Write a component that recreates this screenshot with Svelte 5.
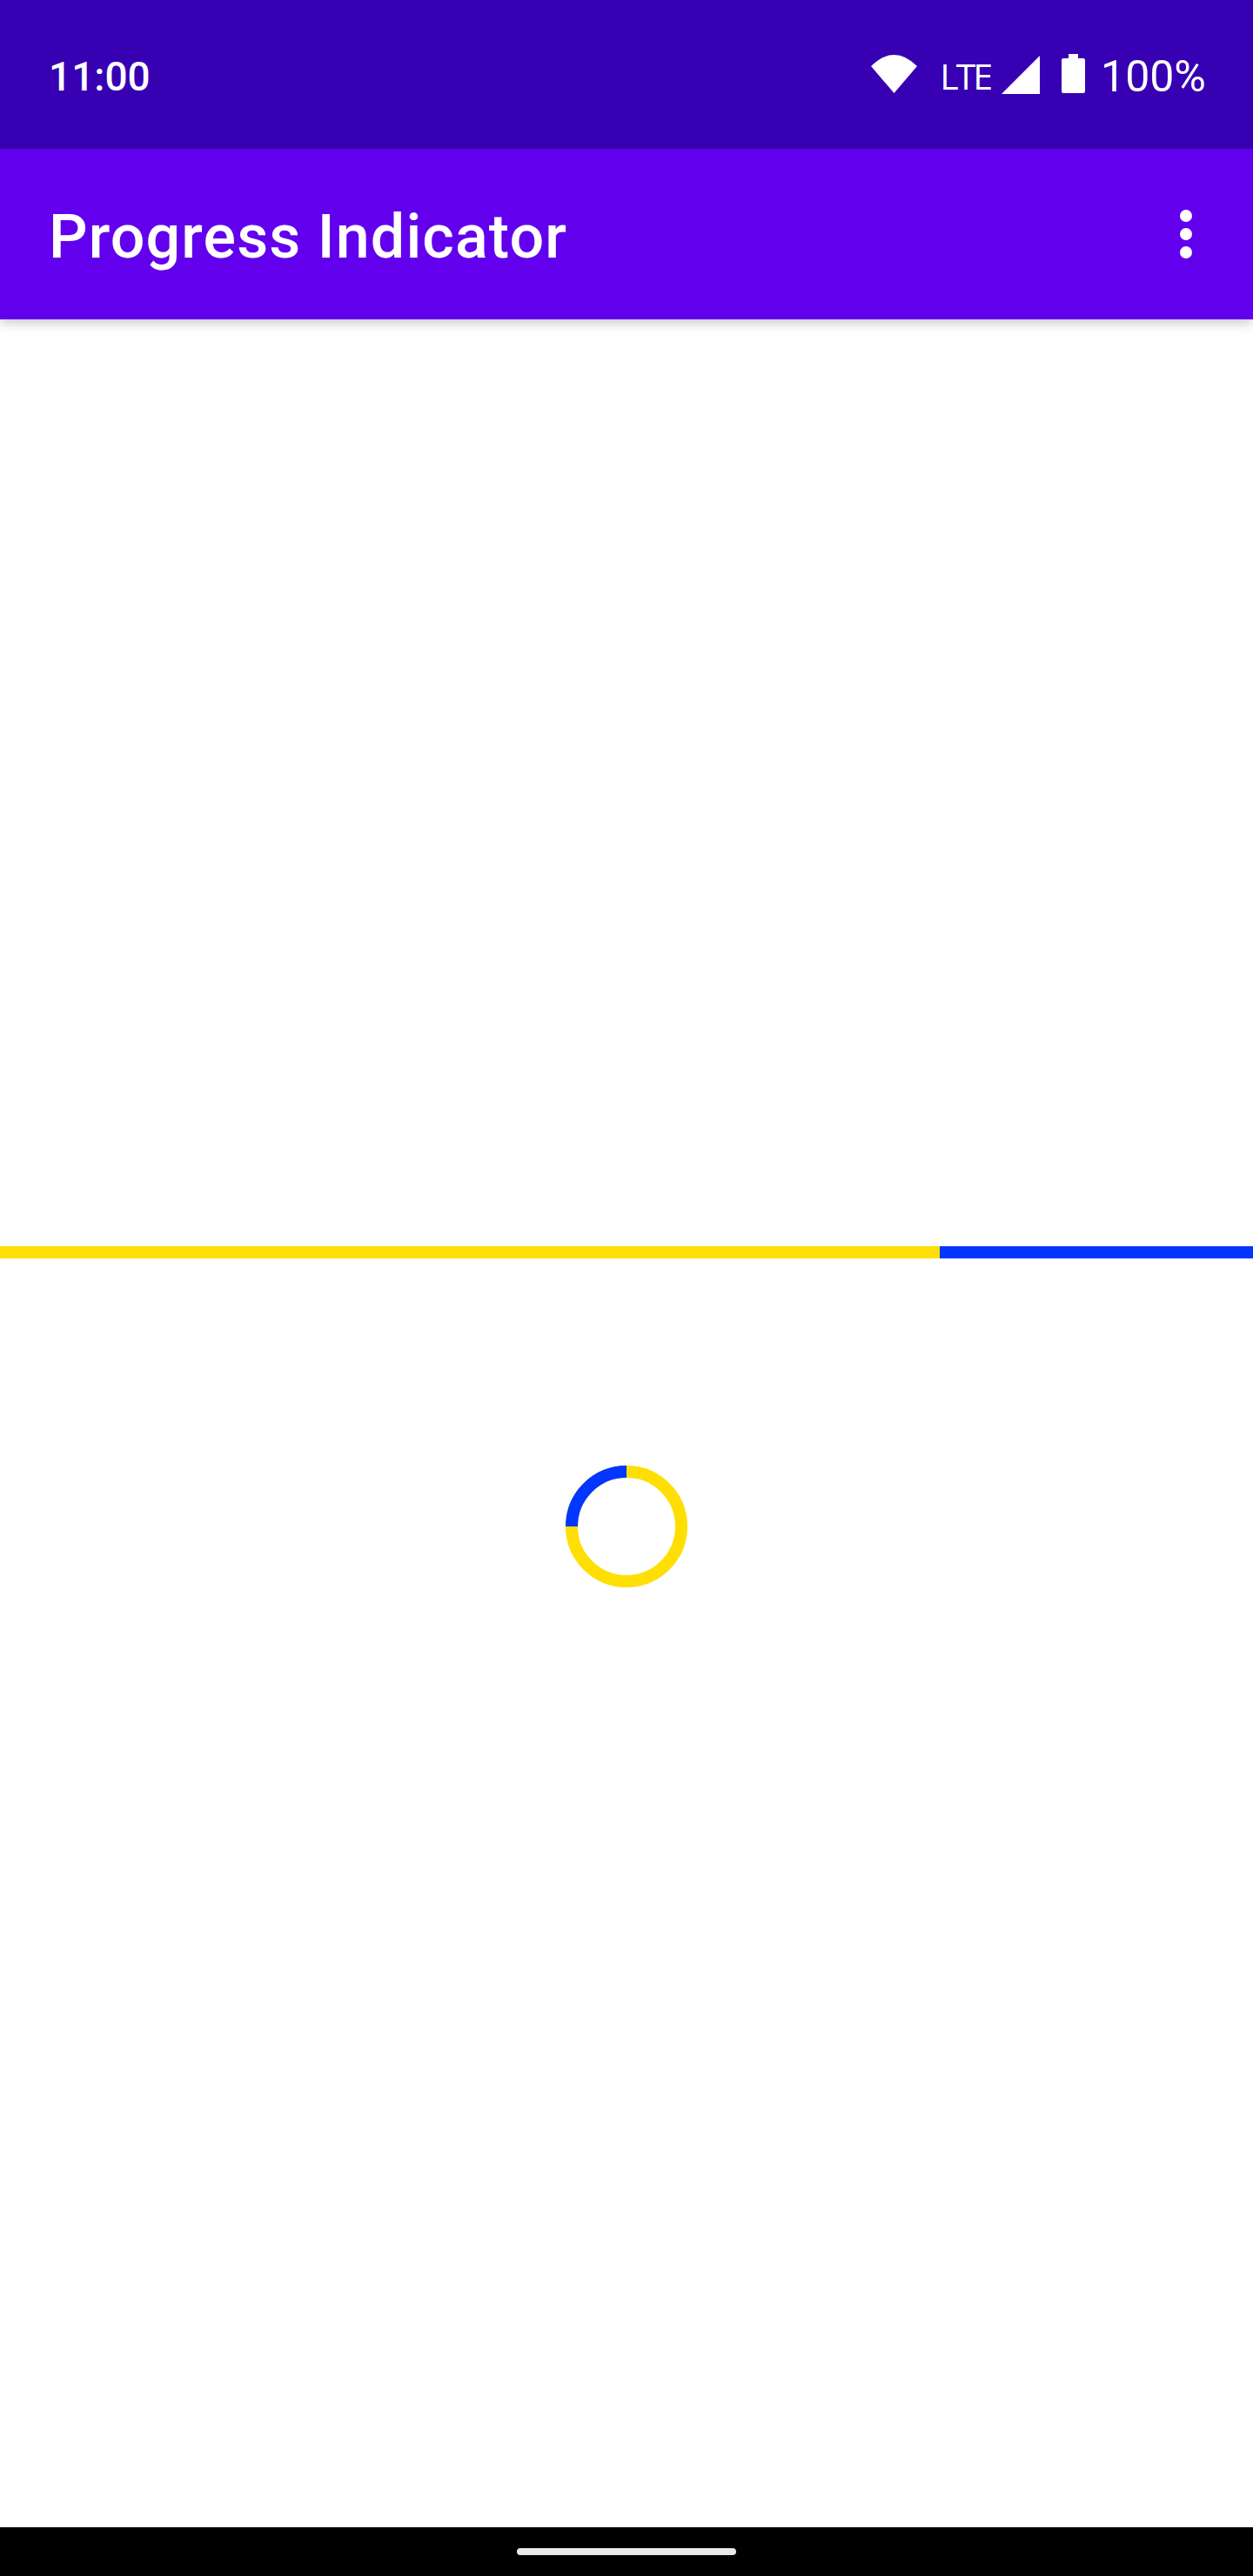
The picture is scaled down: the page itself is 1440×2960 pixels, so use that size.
<script>
  let title = "Progress Indicator";
  let progress = 75;
</script>

<div class="screen">
  <div class="status-bar">
    <span class="time">11:00</span>
    <div class="status-icons">
      <svg class="wifi" width="53" height="44" viewBox="0 0 53 44">
        <path d="M0 13 Q26.5 -13 53 13 L26.5 44Z" fill="#fff" />
      </svg>
      <span class="lte">LTE</span>
      <svg class="signal" width="44" height="44" viewBox="0 0 44 44">
        <path d="M44 0V44H0Z" fill="#fff" />
      </svg>
      <svg class="battery" width="27" height="45" viewBox="0 0 27 45">
        <path d="M8 0H19V5H25Q27 5 27 7V43Q27 45 25 45H2Q0 45 0 43V7Q0 5 2 5H8Z" fill="#fff" />
      </svg>
      <span class="percent">100%</span>
    </div>
  </div>

  <header class="app-bar">
    <h1>{title}</h1>
    <svg class="overflow" width="84" height="84" viewBox="0 0 84 84">
      <circle cx="42" cy="21" r="7" fill="#fff" />
      <circle cx="42" cy="42" r="7" fill="#fff" />
      <circle cx="42" cy="63" r="7" fill="#fff" />
    </svg>
  </header>

  <main class="content">
    <div class="linear">
      <div class="linear-fill" style="width: {progress}%"></div>
    </div>
    <svg class="ring" width="140" height="140" viewBox="0 0 140 140">
      <circle cx="70" cy="70" r="63" fill="none" stroke="#ffde03" stroke-width="14" />
      <path d="M7 70A63 63 0 0 1 70 7" fill="none" stroke="#0336ff" stroke-width="14" />
    </svg>
  </main>

  <div class="nav-bar">
    <div class="handle"></div>
  </div>
</div>

<style>
  :global(body) {
    margin: 0;
    background: #fff;
  }

  .screen {
    display: flex;
    flex-direction: column;
    height: 2960px;
    font-family: Roboto, "Liberation Sans", sans-serif;
    color: #fff;
  }

  .status-bar {
    flex: none;
    height: 171px;
    box-sizing: border-box;
    padding: 60px 54px 0 56px;
    display: flex;
    justify-content: space-between;
    align-items: flex-start;
    background: #3700b3;
  }

  .time {
    font-size: 46px;
    line-height: 56px;
    font-weight: 500;
    font-family: Roboto, sans-serif;
  }

  .status-icons {
    display: flex;
    align-items: flex-start;
  }

  .wifi {
    margin-top: 3px;
  }

  .lte {
    margin-left: 26px;
    margin-top: -1px;
    font-family: "Open Sans", sans-serif;
    font-size: 41px;
    line-height: 56px;
    font-weight: 400;
    letter-spacing: -3px;
  }

  .signal {
    margin-left: 13px;
    margin-top: 4px;
  }

  .battery {
    margin-left: 25px;
    margin-top: 2px;
  }

  .percent {
    margin-left: 18px;
    font-size: 50px;
    line-height: 56px;
    font-weight: 400;
  }

  .app-bar {
    position: relative;
    flex: none;
    height: 196px;
    box-sizing: border-box;
    padding: 0 35px 0 56px;
    display: flex;
    align-items: center;
    justify-content: space-between;
    background: #6200ee;
    box-shadow: 0 4px 12px rgba(0, 0, 0, 0.22);
  }

  h1 {
    margin: 0;
    padding-top: 6px;
    font-size: 70px;
    font-weight: 500;
    letter-spacing: 1.1px;
  }

  .overflow {
    display: block;
  }

  .content {
    flex: 1;
    display: flex;
    flex-direction: column;
    align-items: center;
    background: #fff;
  }

  .linear {
    align-self: stretch;
    height: 14px;
    margin-top: 1065px;
    background: #0336ff;
  }

  .linear-fill {
    height: 100%;
    background: #ffde03;
  }

  .ring {
    display: block;
    margin-top: 238px;
  }

  .nav-bar {
    flex: none;
    height: 56px;
    display: flex;
    justify-content: center;
    align-items: center;
    background: #000;
  }

  .handle {
    width: 252px;
    height: 8px;
    border-radius: 4px;
    background: #e8e8e8;
  }
</style>
